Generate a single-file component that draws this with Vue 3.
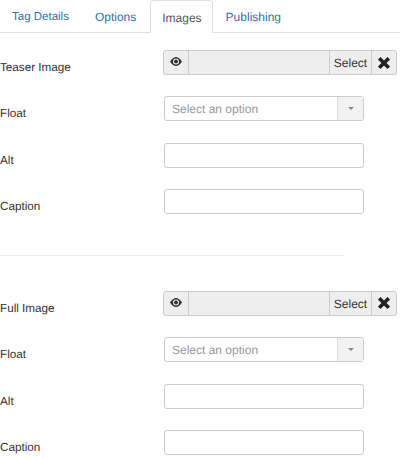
<template>
  <div class="page">
    <ul class="tabs">
      <li v-for="tab in tabs" :key="tab" :class="{ active: tab === 'Images' }">{{ tab }}</li>
    </ul>

    <section v-for="(group, index) in groups" :key="group" class="group">
      <div class="row">
        <label>{{ group }}</label>
        <div class="media">
          <span class="preview">
            <svg width="12" height="9" viewBox="0 0 24 18">
              <path d="M0 9C4 3 8 0 12 0s8 3 12 9c-4 6-8 9-12 9S4 15 0 9z" fill="#333" />
              <circle cx="12" cy="9" r="6" fill="#eee" />
              <circle cx="12" cy="9" r="4" fill="#333" />
            </svg>
          </span>
          <span class="path"></span>
          <span class="select-btn">Select</span>
          <span class="clear-btn">
            <svg width="14" height="14" viewBox="0 0 14 14">
              <path d="M2.2 2.2L11.8 11.8M11.8 2.2L2.2 11.8" stroke="#222" stroke-width="3.6" />
            </svg>
          </span>
        </div>
      </div>

      <div class="row">
        <label>Float</label>
        <div class="chosen">
          <span class="placeholder">Select an option</span>
          <span class="arrow"><i></i></span>
        </div>
      </div>

      <div class="row">
        <label>Alt</label>
        <div class="field"></div>
      </div>

      <div class="row">
        <label>Caption</label>
        <div class="field"></div>
      </div>

      <hr v-if="index === 0" />
    </section>
  </div>
</template>

<script setup>
const tabs = ['Tag Details', 'Options', 'Images', 'Publishing'];
const groups = ['Teaser Image', 'Full Image'];
</script>

<style scoped>
.page {
  width: 400px;
  height: 459px;
  overflow: hidden;
  background: #fff;
  font-family: "Liberation Sans", Arial, sans-serif;
  font-size: 12px;
  color: #333;
  text-rendering: geometricPrecision;
}

.tabs {
  display: flex;
  height: 32px;
  margin: 0 0 17px;
  padding: 0;
  list-style: none;
  border-bottom: 1px solid #ddd;
}

.tabs li {
  height: 32px;
  padding: 0 12px;
  margin-right: 2px;
  line-height: 34px;
  color: #3071a9;
  box-sizing: border-box;
}

.tabs li:first-child {
  font-size: 11.5px;
}

.tabs li.active {
  height: 33px;
  padding: 0 10px 0 11px;
  margin-right: 1px;
  color: #555;
  background: #fff;
  border: 1px solid #ddd;
  border-bottom-color: #fff;
  border-radius: 4px 4px 0 0;
}

.row {
  display: flex;
  height: 25px;
  margin-bottom: 21.33px;
}

label {
  width: 163px;
  flex-shrink: 0;
  font-size: 11.7px;
  line-height: 35px;
  color: #333;
}

.media {
  display: flex;
  width: 234px;
  height: 25px;
  box-sizing: border-box;
  background: #eee;
  border: 1px solid #ccc;
  border-radius: 3px;
}

.preview {
  display: flex;
  align-items: center;
  justify-content: center;
  width: 25px;
  padding-bottom: 2px;
  box-sizing: border-box;
  border-right: 1px solid #ccc;
}

.path {
  flex: 1;
}

.select-btn {
  width: 42px;
  line-height: 24px;
  text-align: center;
  color: #333;
  border-left: 1px solid #ccc;
  box-sizing: border-box;
}

.clear-btn {
  display: flex;
  align-items: center;
  justify-content: center;
  width: 25px;
  box-sizing: border-box;
  border-left: 1px solid #ccc;
}

.chosen,
.field {
  width: 200px;
  height: 25px;
  margin-left: 1px;
  box-sizing: border-box;
  background: #fff;
  border: 1px solid #ccc;
  border-radius: 3px;
}

.chosen {
  display: flex;
}

.placeholder {
  flex: 1;
  padding-left: 7px;
  line-height: 24px;
  color: #999;
}

.arrow {
  display: flex;
  align-items: center;
  justify-content: center;
  width: 25px;
  background: #f2f2f2;
  border-left: 1px solid #ddd;
}

.arrow i {
  width: 0;
  height: 0;
  border-left: 3px solid transparent;
  border-right: 3px solid transparent;
  border-top: 3px solid #888;
}

hr {
  width: 344px;
  height: 1px;
  margin: 41px 0 35px;
  border: 0;
  background: #eee;
}
</style>
